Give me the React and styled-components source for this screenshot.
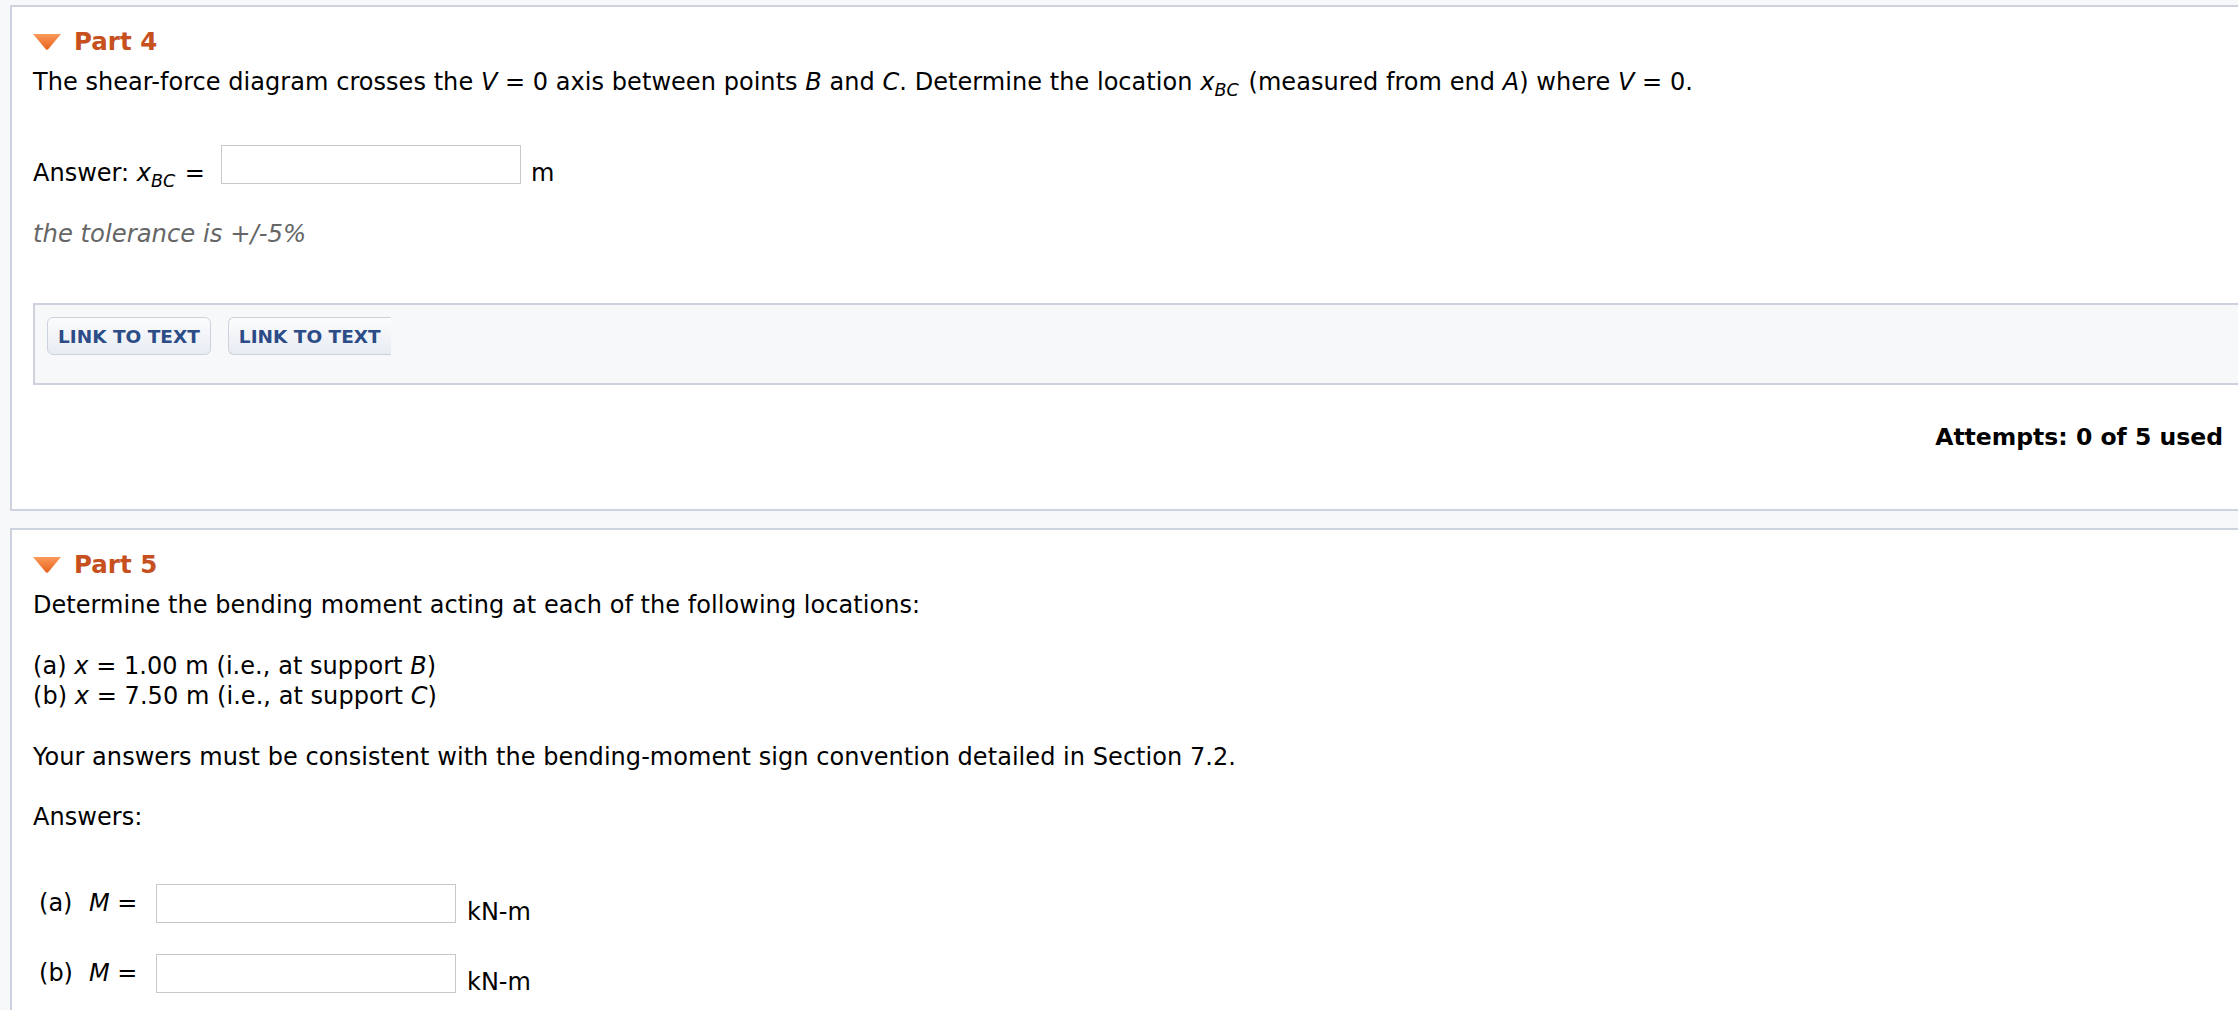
import React from 'react';
import styled, { createGlobalStyle } from 'styled-components';

const GlobalStyle = createGlobalStyle`
  html, body {
    margin: 0;
    padding: 0;
    background: #f7f8fa;
  }
  body {
    font-family: "DejaVu Sans", Verdana, sans-serif;
    color: #000;
  }
`;

const Page = styled.div`
  padding: 5px 0 0 10px;
  min-height: 100vh;
  overflow: hidden;
  box-sizing: border-box;
`;

const Panel = styled.section`
  background: #fff;
  border: 2px solid #cdd3de;
  border-right: none;
  padding: 21px 0 ${(p) => p.$bottom || 0}px 21px;
  margin-bottom: 17px;
`;

const Header = styled.div`
  display: flex;
  align-items: center;
  gap: 13px;
  height: 28px;
  margin-bottom: 11px;
`;

const PartTitle = styled.h2`
  margin: 0;
  font-size: 24.5px;
  line-height: 28px;
  font-weight: bold;
  color: #c6501e;
`;

const Text = styled.div`
  font-size: 24px;
  line-height: 30.3px;
  letter-spacing: 0.05px;
`;

const Para = styled.p`
  margin: 0 0 30.3px;
  &:last-child {
    margin-bottom: 0;
  }
`;

const Sub = styled.sub`
  font-size: 17.5px;
  line-height: 0;
  vertical-align: -6px;
  font-style: italic;
  margin-right: 2px;
`;

const AnswerRow = styled.div`
  display: flex;
  align-items: flex-end;
  margin-top: ${(p) => p.$top}px;
`;

const Inline = styled.span`
  font-size: 24px;
  line-height: 1;
  margin-bottom: -1px;
  margin-left: ${(p) => p.$left || 0}px;
  white-space: nowrap;
`;

const Field = styled.input`
  box-sizing: border-box;
  width: 300px;
  height: 39px;
  border: 1px solid #c8c8c8;
  background: #fff;
  margin-left: ${(p) => p.$left || 0}px;
  padding: 0 6px;
  font-size: 20px;
  outline: none;
`;

const Tolerance = styled.div`
  margin-top: 35px;
  font-size: 24.3px;
  line-height: 30px;
  font-style: italic;
  color: #666;
`;

const LinkBox = styled.div`
  margin-top: 54px;
  background: #f7f8fa;
  border: 2px solid #cdd3de;
  border-right: none;
  padding: 12px 12px 28px 12px;
  display: flex;
  gap: 17px;
`;

const LinkButton = styled.button`
  box-sizing: border-box;
  height: 38px;
  padding: 0 10px;
  font-family: "DejaVu Sans", Verdana, sans-serif;
  font-size: 18.5px;
  font-weight: bold;
  color: #2b4c87;
  background: linear-gradient(#fbfcfd, #e8ecf2);
  border: 1px solid #cbd3de;
  border-radius: ${(p) => (p.$clipped ? '6px 0 0 6px' : '6px')};
  border-right: ${(p) => (p.$clipped ? 'none' : '1px solid #cbd3de')};
  cursor: pointer;
`;

const Attempts = styled.div`
  margin-top: 37px;
  padding-right: 15px;
  text-align: right;
  font-size: 23.5px;
  line-height: 30px;
  font-weight: bold;
`;

const Rows = styled.div`
  margin-top: 51px;
  display: flex;
  flex-direction: column;
  gap: 31px;
`;

const MRow = styled.div`
  display: flex;
  align-items: flex-end;
  margin-left: 6px;
`;

const RowLabel = styled.div`
  align-self: center;
  display: flex;
  width: 117px;
  font-size: 24px;
  line-height: 30px;
  white-space: nowrap;
`;

const Letter = styled.span`
  width: 50px;
`;

const Triangle = () => (
  <svg width="28" height="16" viewBox="0 0 28 16">
    <defs>
      <linearGradient id="tri" x1="0" y1="0" x2="0" y2="1">
        <stop offset="0" stopColor="#fb9a5a" />
        <stop offset="1" stopColor="#e8621f" />
      </linearGradient>
    </defs>
    <path d="M0 0 H28 L15.2 15.2 Q14 16.2 12.8 15.2 Z" fill="url(#tri)" />
  </svg>
);

const Part = ({ n }) => (
  <Header>
    <Triangle />
    <PartTitle>Part {n}</PartTitle>
  </Header>
);

const X = () => (
  <>
    <i>x</i>
    <Sub>BC</Sub>
  </>
);

const App = () => (
  <>
    <GlobalStyle />
    <Page>
      <Panel $bottom={57}>
        <Part n={4} />
        <Text>
          The shear-force diagram crosses the <i>V</i> = 0 axis between points <i>B</i> and <i>C</i>.
          Determine the location <X /> (measured from end <i>A</i>) where <i>V</i> = 0.
        </Text>
        <AnswerRow $top={48}>
          <Inline>
            Answer: <X /> =
          </Inline>
          <Field $left={16} />
          <Inline $left={10}>m</Inline>
        </AnswerRow>
        <Tolerance>the tolerance is +/-5%</Tolerance>
        <LinkBox>
          <LinkButton>LINK TO TEXT</LinkButton>
          <LinkButton $clipped>LINK TO TEXT</LinkButton>
        </LinkBox>
        <Attempts>Attempts: 0 of 5 used</Attempts>
      </Panel>
      <Panel $bottom={40}>
        <Part n={5} />
        <Text>
          <Para>Determine the bending moment acting at each of the following locations:</Para>
          <Para>
            (a) <i>x</i> = 1.00 m (i.e., at support <i>B</i>)
            <br />
            (b) <i>x</i> = 7.50 m (i.e., at support <i>C</i>)
          </Para>
          <Para>
            Your answers must be consistent with the bending-moment sign convention detailed in Section 7.2.
          </Para>
          <Para>Answers:</Para>
        </Text>
        <Rows>
          {['a', 'b'].map((k) => (
            <MRow key={k}>
              <RowLabel>
                <Letter>({k})</Letter>
                <span>
                  <i>M</i> =
                </span>
              </RowLabel>
              <Field />
              <Inline $left={11}>kN-m</Inline>
            </MRow>
          ))}
        </Rows>
      </Panel>
    </Page>
  </>
);

export default App;
